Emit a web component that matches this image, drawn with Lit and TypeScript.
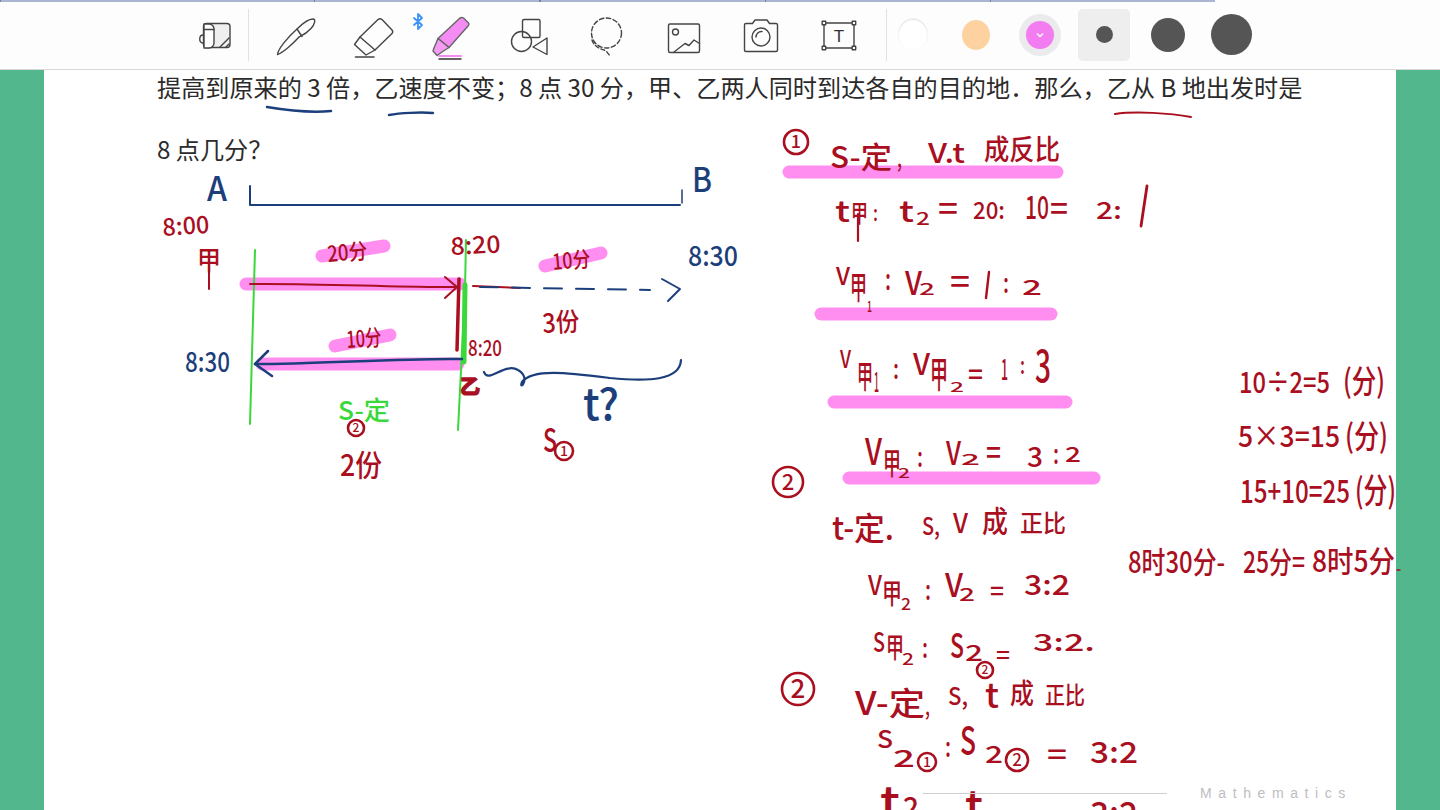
import { LitElement, html, svg, css } from "lit";
import { customElement } from "lit/decorators.js";

const RED = "#a90f1f";
const NAVY = "#1c3f7c";
const GREEN = "#3bd83c";
const PINK = "#ff8ef0";

// [text, x, baseline, width, size, colour?, rotation?]
type Ink = [string, number, number, number, number, string?, number?];

const INK: Ink[] = [
  // diagram on the left
  ["A", 207, 201, 20, 28, NAVY],
  ["B", 692, 192, 20, 28, NAVY],
  ["8:00", 163, 236, 47, 20, RED, -4],
  ["甲", 197, 270, 24, 26],
  ["20分", 328, 262, 40, 22, RED, -5],
  ["8:20", 451, 255, 50, 20, RED, -3],
  ["10分", 553, 270, 38, 22, RED, -5],
  ["8:30", 688, 266, 50, 23, NAVY],
  ["3份", 543, 333, 37, 26, RED, -4],
  ["10分", 347, 348, 35, 23, RED, -4],
  ["8:20", 468, 356, 34, 18],
  ["8:30", 185, 372, 45, 22, NAVY],
  ["t?", 583, 420, 36, 36, NAVY],
  ["S-定", 338, 420, 52, 26, GREEN],
  ["2份", 340, 476, 42, 30],
  ["S", 543, 452, 14, 26],

  // working, right column
  ["S-定", 830, 168, 62, 30],
  [",", 897, 167, 5, 20],
  ["V.t", 928, 163, 37, 22],
  ["成反比", 984, 160, 76, 28],

  ["t", 835, 222, 15, 24],
  ["甲", 851, 222, 17, 24],
  [":", 873, 221, 5, 18],
  ["t", 899, 222, 15, 24],
  ["2", 916, 225, 14, 14],
  ["=", 938, 220, 20, 26],
  ["20:", 973, 219, 32, 20],
  ["10", 1025, 219, 24, 26],
  ["=", 1050, 220, 18, 26],
  ["2:", 1096, 219, 26, 20],

  ["V", 836, 285, 14, 20],
  ["甲", 850, 299, 17, 32],
  ["1", 867, 312, 5, 12],
  [":", 885, 290, 6, 24],
  ["V", 905, 295, 17, 26],
  ["2", 919, 295, 16, 13],
  ["=", 950, 293, 20, 26],
  [":", 1003, 293, 6, 22],
  ["2", 1022, 295, 20, 17],

  ["V", 840, 368, 11, 20],
  ["甲", 857, 388, 16, 32],
  ["1", 874, 392, 5, 22],
  [":", 893, 379, 6, 22],
  ["V", 913, 375, 17, 24],
  ["甲", 930, 388, 18, 36],
  ["2", 950, 392, 14, 11],
  ["=", 968, 385, 15, 24],
  ["1", 1001, 380, 7, 24],
  [":", 1020, 374, 5, 20],
  ["3", 1035, 382, 16, 36],

  ["V", 865, 465, 17, 30],
  ["甲", 883, 474, 18, 30],
  ["2", 898, 478, 12, 11],
  [":", 917, 467, 6, 22],
  ["V", 946, 465, 15, 26],
  ["2", 961, 465, 19, 12],
  ["=", 986, 464, 15, 26],
  ["3", 1027, 467, 16, 22],
  [":", 1053, 464, 6, 22],
  ["2", 1065, 462, 16, 17],

  ["t-定.", 832, 540, 62, 32],
  ["S,", 922, 535, 18, 20],
  ["V", 953, 533, 15, 22],
  ["成", 982, 532, 26, 30],
  ["正比", 1020, 532, 46, 24],

  ["V", 868, 595, 14, 22],
  ["甲", 882, 604, 20, 28],
  ["2", 901, 610, 10, 13],
  [":", 925, 600, 6, 22],
  ["V", 945, 597, 18, 26],
  ["2", 959, 601, 16, 15],
  ["=", 990, 601, 14, 22],
  ["3:2", 1024, 595, 46, 22],

  ["S", 873, 652, 12, 22],
  ["甲", 886, 658, 18, 28],
  ["2", 902, 665, 12, 13],
  [":", 922, 658, 6, 22],
  ["S", 950, 658, 14, 28],
  ["2", 965, 661, 18, 18],
  ["=", 996, 664, 14, 20],
  ["3:2.", 1033, 651, 62, 20],

  ["V-定", 855, 715, 70, 32],
  [",", 925, 715, 5, 20],
  ["S,", 948, 705, 20, 20],
  ["t", 985, 708, 14, 28],
  ["成", 1010, 704, 24, 28],
  ["正比", 1045, 704, 40, 24],

  ["S", 877, 748, 16, 20],
  ["2", 893, 767, 22, 20],
  [":", 945, 757, 6, 22],
  ["S", 960, 755, 16, 32],
  ["2", 985, 763, 18, 20],
  ["=", 1047, 765, 20, 24],
  ["3:2", 1090, 763, 48, 24],

  ["t", 880, 818, 20, 36],
  ["2", 903, 818, 16, 24],
  ["t", 965, 822, 18, 36],
  ["3:2", 1090, 826, 48, 28],

  // sums at the far right
  ["10÷2=5", 1239, 393, 91, 24],
  ["(分)", 1343, 393, 42, 32],
  ["5×3=15", 1238, 447, 102, 24],
  ["(分)", 1345, 448, 43, 32],
  ["15+10=25", 1240, 503, 110, 26],
  ["(分)", 1355, 503, 41, 34],
  ["8时30分-", 1128, 573, 97, 30],
  ["25分=", 1243, 573, 62, 30],
  ["8时5分", 1312, 572, 83, 30],
];

// loose strokes: [path, colour, width, dash?]
const STROKES: [string, string, number, string?][] = [
  ["M267 107 C285 110 310 113 331 111", NAVY, 2.5],
  ["M389 115 C400 113 420 112 433 113", NAVY, 2.5],
  ["M1115 114 C1135 111 1170 113 1191 117", RED, 2],
  ["M250 186 L250 205 L680 205", NAVY, 2],
  ["M682 190 L682 203", NAVY, 1.5],
  ["M209 262 L209 289", RED, 2],
  ["M255 250 L250 424", GREEN, 2],
  ["M466 240 L465 290 L458 430", GREEN, 2],
  ["M465 285 L464 362", GREEN, 5],
  ["M250 284 C320 283 400 288 455 287", RED, 2],
  ["M445 277 L457 287 L445 298", RED, 2],
  ["M459 279 L457 350", RED, 3.5],
  ["M473 286 L520 288", RED, 2],
  ["M480 287 L650 290", NAVY, 2, "18 14"],
  ["M662 279 L680 289 L668 301", NAVY, 2],
  ["M255 364 C320 364 400 358 462 359", NAVY, 2.5],
  ["M268 351 L255 364 L272 376", NAVY, 2.5],
  ["M484 372 C488 384 505 362 518 370 C532 378 518 392 522 382 C532 368 570 373 610 378 C650 382 680 380 681 360", NAVY, 2.2],
  ["M858 214 L858 241", RED, 2.2],
  ["M1147 186 L1141 226", RED, 2.8],
  ["M989 272 L986 298", RED, 2.4],
  ["M1397 570 L1400 570", RED, 1.5],
];

// marker bands, drawn under everything else
const MARKS: [number, number, number, number][] = [
  [322, 256, 384, 246],
  [545, 266, 601, 253],
  [335, 346, 390, 335],
  [246, 284, 460, 284],
  [262, 364, 458, 364],
  [789, 172, 1057, 172],
  [821, 314, 1051, 314],
  [834, 402, 1066, 402],
  [849, 478, 1094, 478],
];

// ringed numbers: [cx, cy, r, label, size]
const RINGS: [number, number, number, string, number][] = [
  [356, 428, 8, "2", 12],
  [564, 451, 9, "1", 14],
  [796, 142, 12, "1", 18],
  [788, 482, 15, "2", 22],
  [985, 670, 8, "2", 12],
  [798, 689, 16, "2", 26],
  [927, 762, 9, "1", 14],
  [1017, 760, 11, "2", 17],
];

// hand-written digits sit tall, so latin-only runs get a larger size squeezed to the same width
const inkSize = (t: string, s: number) => (/[\u4e00-\u9fff]/.test(t) ? s : Math.round(s * 1.22));

@customElement("app-root")
export class AppRoot extends LitElement {
  static styles = css`
    :host {
      display: flex;
      flex-direction: column;
      width: 1440px;
      height: 810px;
      overflow: hidden;
      background: #fff;
    }
    .toolbar {
      position: relative;
      flex: none;
      display: flex;
      align-items: center;
      height: 70px;
      padding-left: 190px;
      box-sizing: border-box;
      background: #fdfdfd;
      border-bottom: 1px solid #d8d8dc;
    }
    .progress {
      position: absolute;
      top: 0;
      left: 0;
      width: 1215px;
      height: 2px;
      background: repeating-linear-gradient(90deg, #aab6d0 0 224px, #77839c 224px 225.3px);
      background-position: 90px 0;
    }
    .tool {
      flex: none;
      width: 77.6px;
      height: 69px;
      display: flex;
      align-items: center;
      justify-content: center;
    }
    .tool.first {
      width: 50px;
    }
    .tool svg {
      width: 44px;
      height: 48px;
      overflow: visible;
      fill: none;
      stroke: #444;
      stroke-width: 1.4;
      stroke-linejoin: round;
      stroke-linecap: round;
    }
    .tool text {
      font: 400 17px "Liberation Sans", sans-serif;
      fill: #333;
      stroke: none;
    }
    .rule {
      flex: none;
      width: 1px;
      height: 52px;
      background: #e2e2e2;
      margin-left: 8px;
    }
    .rule + .tool {
      margin-left: 8px;
    }
    .swatches {
      display: flex;
      margin-left: -6px;
    }
    .swatch {
      flex: none;
      width: 63.8px;
      height: 52px;
      display: flex;
      align-items: center;
      justify-content: center;
      border-radius: 5px;
    }
    .swatch.on {
      width: 52px;
      margin: 0 5.9px;
      background: #eeeeee;
    }
    .dot {
      border-radius: 50%;
      display: flex;
      align-items: center;
      justify-content: center;
    }
    .white {
      width: 28px;
      height: 30px;
      background: #fff;
      box-shadow: 0 -1px 2px #dcdcdc;
    }
    .peach {
      width: 28px;
      height: 30px;
      background: #fdd2a0;
    }
    .ring {
      width: 42px;
      height: 42px;
      background: #ebebed;
    }
    .pink {
      width: 28px;
      height: 28px;
      background: #f27cf0;
    }
    .pink svg {
      width: 10px;
      height: 8px;
      fill: none;
      stroke: #fff;
      stroke-width: 1.5;
    }
    .ink-s {
      width: 17px;
      height: 17px;
      background: #555;
    }
    .ink-m {
      width: 34px;
      height: 34px;
      background: #555;
    }
    .ink-l {
      width: 41px;
      height: 41px;
      background: #555;
    }
    .desk {
      flex: 1;
      display: flex;
      min-height: 0;
      background: #53b78d;
      padding: 0 44px;
    }
    .paper {
      position: relative;
      flex: 1;
      background: #fff;
      padding-left: 113px;
      font-family: "Noto Sans CJK SC", "Liberation Sans", sans-serif;
      font-size: 24.15px;
      color: #2b2b2b;
    }
    .paper p {
      margin: 0 0 28px;
      line-height: 34px;
      white-space: nowrap;
    }
    .canvas {
      position: absolute;
      top: 0;
      left: 0;
      width: 1352px;
      height: 740px;
      overflow: visible;
    }
    .canvas text {
      font-family: "Noto Sans CJK SC", "Liberation Sans", sans-serif;
      font-weight: 500;
    }
    .canvas .z {
      font-weight: 900;
      stroke: #a90f1f;
      stroke-width: 1.2;
    }
    .canvas path,
    .canvas line,
    .canvas circle {
      fill: none;
      stroke-linecap: round;
      stroke-linejoin: round;
    }
    .footer {
      position: absolute;
      top: 715px;
      left: 879px;
      display: flex;
      align-items: center;
      gap: 33px;
      font: 400 14px "Liberation Sans", sans-serif;
      letter-spacing: 6.6px;
      color: #bdbdc2;
      white-space: nowrap;
    }
    .footer i {
      width: 244px;
      height: 1px;
      background: #cfcfd3;
    }
  `;

  private inkText() {
    return INK.map(([t, x, y, w, s, c, r]) => svg`<text x=${x} y=${y} fill=${c ?? RED} font-size=${inkSize(t, s)}
      textLength=${w} lengthAdjust="spacingAndGlyphs"
      transform=${r ? `rotate(${r} ${x} ${y})` : ""}>${t}</text>`);
  }

  private sketch() {
    return html`<svg class="canvas" viewBox="44 70 1352 740">
      ${MARKS.map(([a, b, c, d]) => svg`<line x1=${a} y1=${b} x2=${c} y2=${d} stroke=${PINK} stroke-width="13"></line>`)}
      ${STROKES.map(([d, c, w, dash]) => svg`<path d=${d} stroke=${c} stroke-width=${w} stroke-dasharray=${dash ?? "none"}></path>`)}
      ${this.inkText()}
      <text class="z" x="460" y="394" fill=${RED} font-size="20">乙</text>
      ${RINGS.map(([x, y, r, t, s]) => svg`<circle cx=${x} cy=${y} r=${r} stroke=${RED} stroke-width="2.6"></circle>
        <text x=${x} y=${y + s * 0.36} fill=${RED} font-size=${s} text-anchor="middle">${t}</text>`)}
    </svg>`;
  }

  render() {
    return html`
      <div class="toolbar">
        <div class="progress"></div>
        <div class="tool first">
          <svg viewBox="0 0 44 48">
            <rect x="10.5" y="12.5" width="26.5" height="24" rx="3" fill="#efefef"></rect>
            <path d="M11 13 h5 a5 5 0 0 1 5 5 v14 a5 5 0 0 1 -5 5 h-5z" fill="#fff"></path>
            <path d="M11 18.5 h10 M10 24 c-4 0 -4.5 7 -.5 8 M27 36 l9 -9 M33 36 l3 -3"></path>
          </svg>
        </div>
        <div class="rule"></div>
        <div class="tool">
          <svg viewBox="0 0 44 48">
            <path d="M3.5 43.5 C4 38 14 26 23 18 C28 13 35 8 39 8 C42 8 41 13 37 17.5 C32 23 27 25 25 26 C18 34 8 42 3.5 43.5Z"></path>
            <path d="M23 18 L28 25.5"></path>
          </svg>
        </div>
        <div class="tool">
          <svg viewBox="0 0 44 48">
            <path d="M27 8.5 Q29 7 31 8.5 L41 19 Q42.5 21 41 22.5 L24 39 L9 26Z"></path>
            <path d="M9 26 L3.5 33.5 L15 44 L24 39"></path>
            <path d="M4.5 46 H23" stroke-width="1.6"></path>
          </svg>
        </div>
        <div class="tool">
          <svg viewBox="0 0 44 48">
            <path d="M-15 7 L-7 14 L-11 18 V3 L-7 7 L-15 14" stroke="#3b94f5" stroke-width="1.8"></path>
            <path d="M31 7 Q33 6 34.5 7 L39.5 12 Q40.5 13.5 39.5 14.5 L20 36.5 L9 27.5Z" fill="#f58cf3" stroke="#666"></path>
            <path d="M9 27.5 L20 36.5 L13 41 L8 44.5 L4 40 L5 37Z" fill="#f59bf2" stroke="#666"></path>
            <path d="M10 45 H32" stroke="#f58cf3" stroke-width="2"></path>
            <path d="M10 48 H32" stroke="#333" stroke-width="1.5"></path>
          </svg>
        </div>
        <div class="tool">
          <svg viewBox="0 0 44 48">
            <rect x="15.5" y="8.5" width="17.5" height="18" rx="1.5"></rect>
            <circle cx="14.5" cy="30.5" r="10"></circle>
            <path d="M40 27 L26 36 L40 43.5Z"></path>
          </svg>
        </div>
        <div class="tool">
          <svg viewBox="0 0 44 48">
            <circle cx="22.5" cy="22" r="15" stroke-dasharray="4.5 2.5"></circle>
            <path d="M8 29 C10 36 17 38 20 39 C23 40 24 43 25.5 44" stroke-dasharray="4 2.5"></path>
          </svg>
        </div>
        <div class="tool">
          <svg viewBox="0 0 44 48">
            <rect x="6.5" y="13" width="31" height="28.5" rx="1.5"></rect>
            <circle cx="13.5" cy="21" r="3"></circle>
            <path d="M12 41 L23 32.5 L27 34.5 L32 29 L37.5 32.5"></path>
          </svg>
        </div>
        <div class="tool">
          <svg viewBox="0 0 44 48">
            <path d="M5.5 14 Q5.5 12.5 7 12.5 H13.5 L16 9 H28 L30.5 12.5 H37 Q38.5 12.5 38.5 14 V39 Q38.5 40.5 37 40.5 H7 Q5.5 40.5 5.5 39Z"></path>
            <circle cx="22" cy="26" r="9"></circle>
            <path d="M17 26 a5.5 5.5 0 0 1 6 -5.5"></path>
          </svg>
        </div>
        <div class="tool">
          <svg viewBox="0 0 44 48">
            <rect x="7" y="12" width="30" height="25"></rect>
            <rect x="5.2" y="10.2" width="3.5" height="3.5" fill="#fff"></rect>
            <rect x="35.2" y="10.2" width="3.5" height="3.5" fill="#fff"></rect>
            <rect x="5.2" y="35.2" width="3.5" height="3.5" fill="#fff"></rect>
            <rect x="35.2" y="35.2" width="3.5" height="3.5" fill="#fff"></rect>
            <text x="22" y="31" text-anchor="middle">T</text>
          </svg>
        </div>
        <div class="rule"></div>
        <div class="swatches">
          <div class="swatch"><span class="dot white"></span></div>
          <div class="swatch"><span class="dot peach"></span></div>
          <div class="swatch">
            <span class="dot ring">
              <span class="dot pink">
                <svg viewBox="0 0 10 8"><path d="M2 2.5 L5 5.5 L8 2.5"></path></svg>
              </span>
            </span>
          </div>
          <div class="swatch on"><span class="dot ink-s"></span></div>
          <div class="swatch"><span class="dot ink-m"></span></div>
          <div class="swatch"><span class="dot ink-l"></span></div>
        </div>
      </div>
      <div class="desk">
        <div class="paper">
          <p>提高到原来的 3 倍，乙速度不变；8 点 30 分，甲、乙两人同时到达各自的目的地．那么，乙从 B 地出发时是</p>
          <p>8 点几分？</p>
          ${this.sketch()}
          <div class="footer"><i></i><span>Mathematics</span></div>
        </div>
      </div>
    `;
  }
}
